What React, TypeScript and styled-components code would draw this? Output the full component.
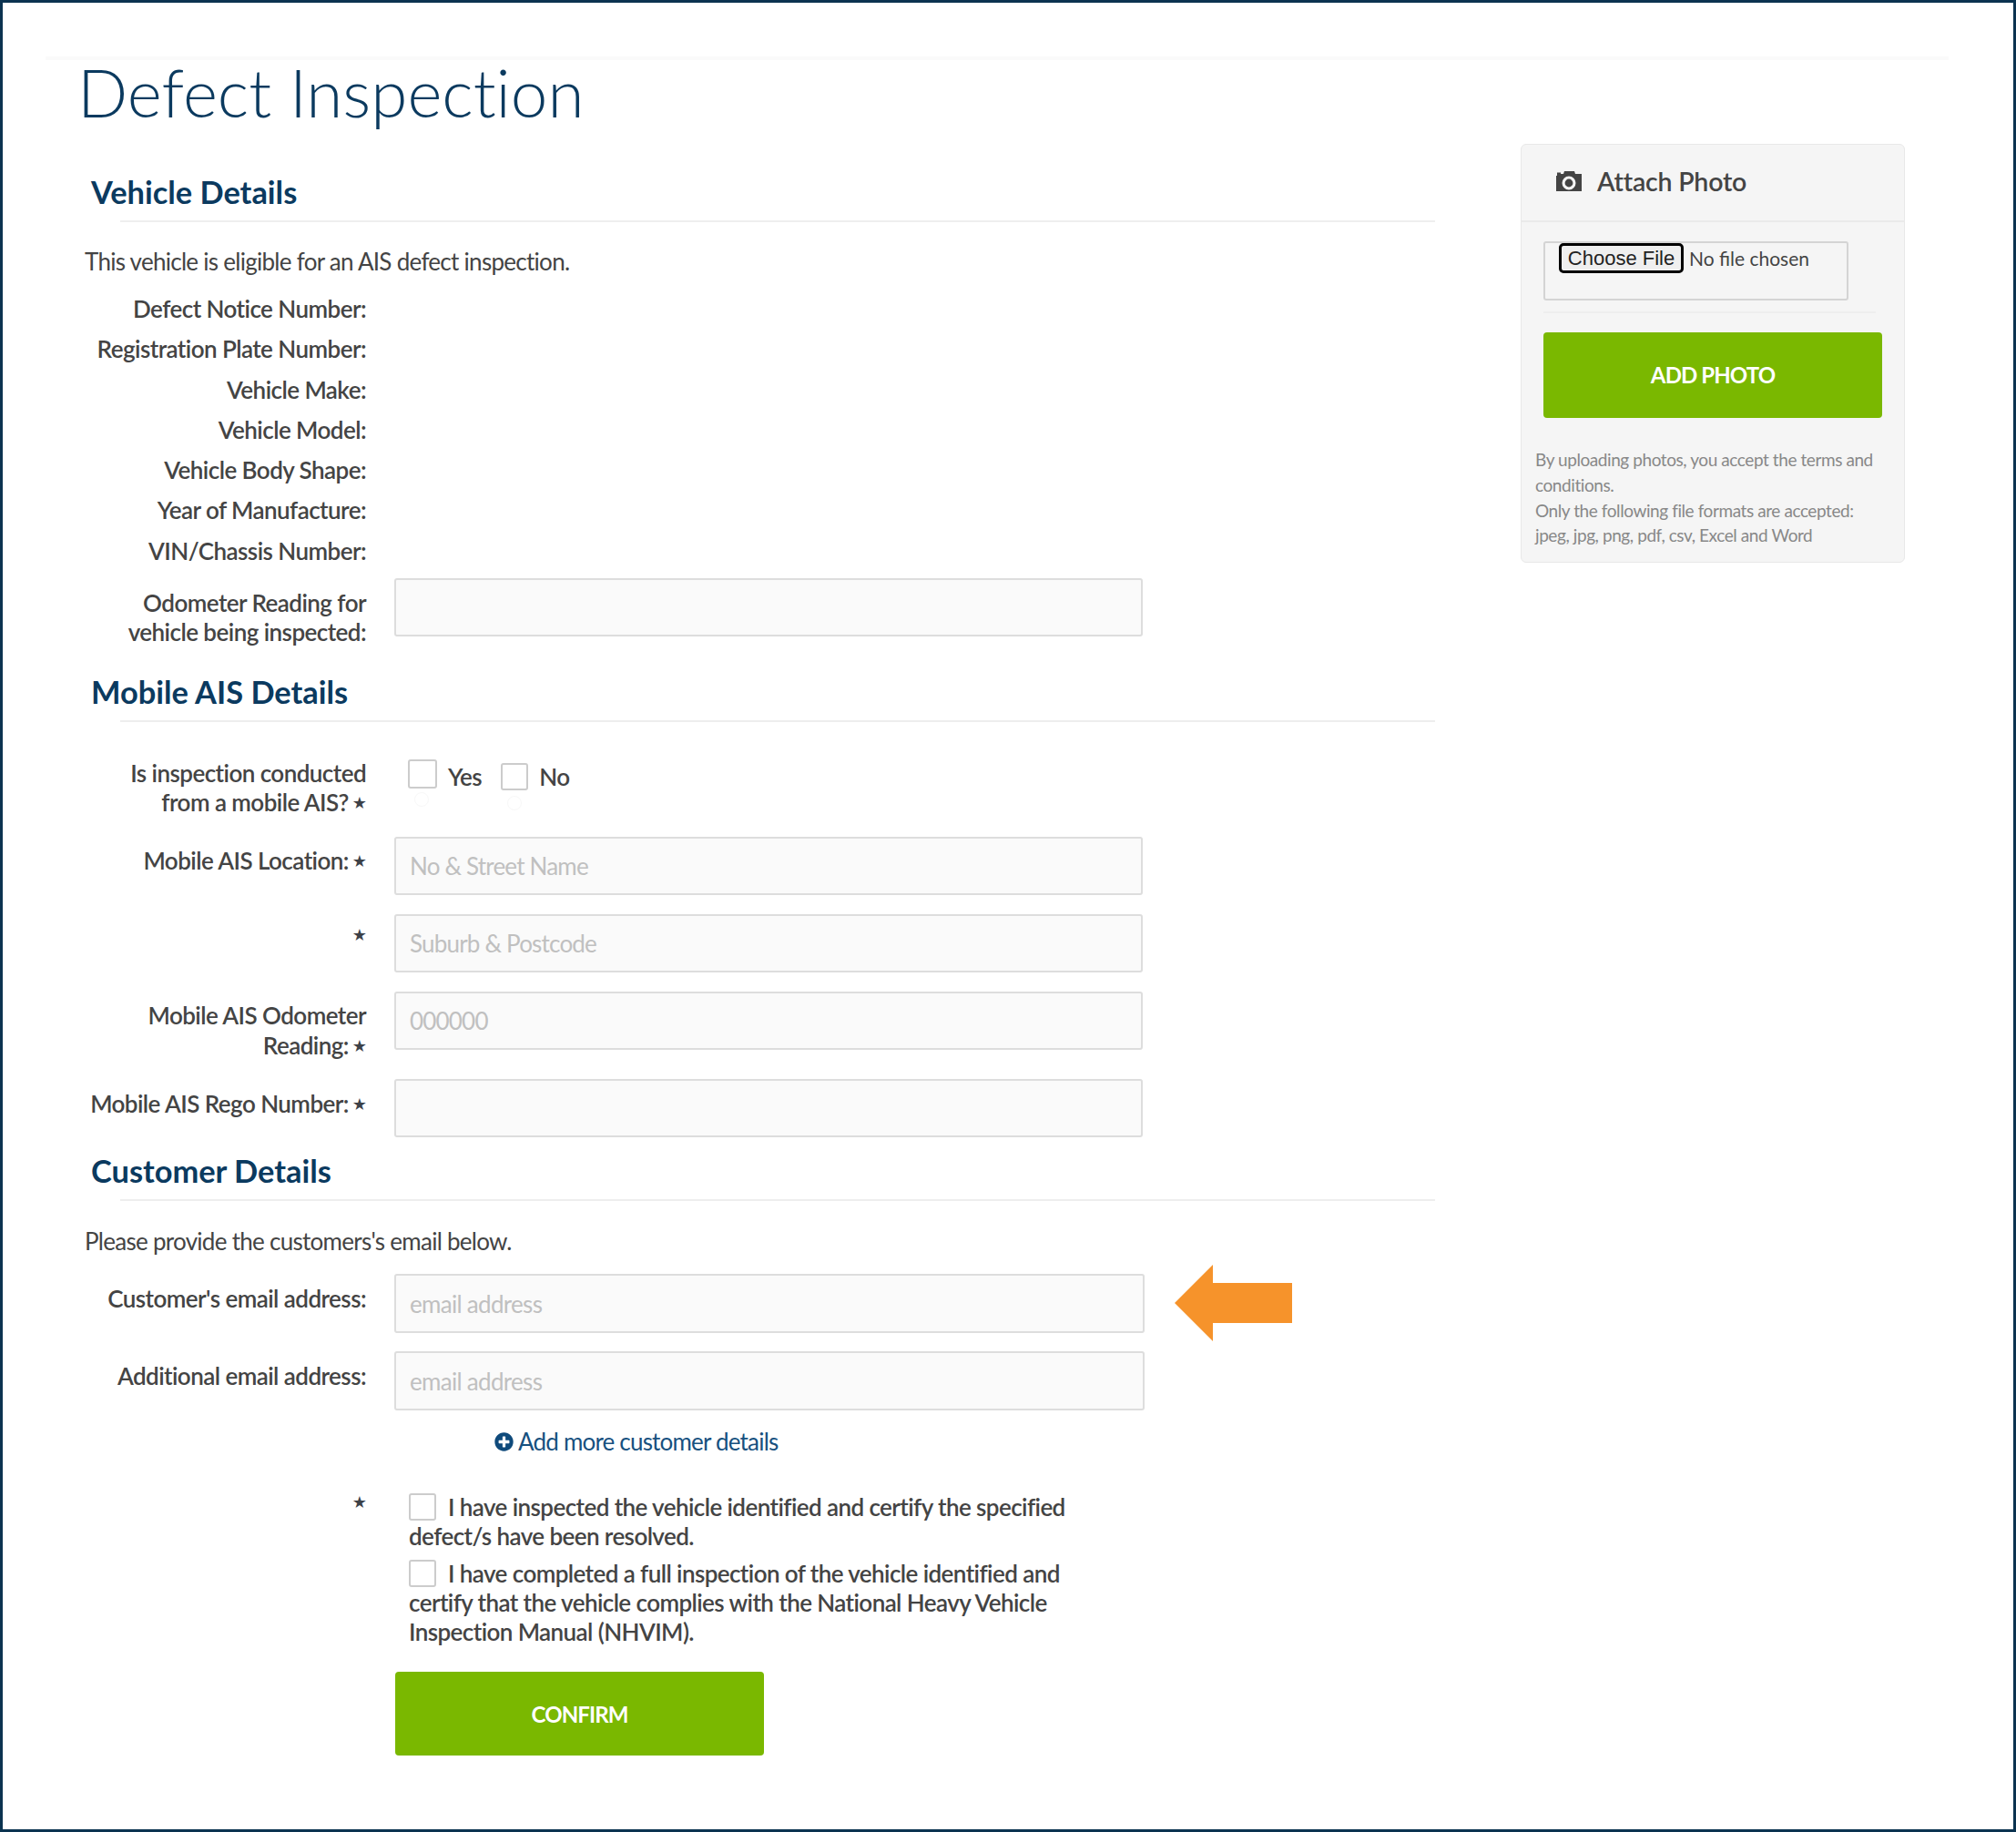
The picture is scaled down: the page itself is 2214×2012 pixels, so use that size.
import { FC, ReactNode } from "react";
import styled, { createGlobalStyle } from "styled-components";
import { FaPlusCircle } from "react-icons/fa";

const GlobalStyle = createGlobalStyle`
  html, body {
    margin: 0;
    padding: 0;
    background: #fff;
  }
  body {
    font-family: "Lato", "Liberation Sans", sans-serif;
    color: #444;
  }
`;

const Frame = styled.div`
  box-sizing: border-box;
  width: 2214px;
  height: 2012px;
  border: 3px solid #0b3350;
  overflow: hidden;
`;

const PageHeader = styled.header`
  width: 2090px;
  margin: 59px 0 0 47px;
  border-top: 4px solid #fafafa;
`;

const Title = styled.h1`
  margin: 0 0 0 35px;
  padding-top: 1px;
  font-size: 72.8px;
  line-height: 68px;
  font-weight: 300;
  color: #0b3a5f;
  font-feature-settings: "liga" 0;
`;

const Body = styled.div`
  display: flex;
  align-items: flex-start;
`;

const Main = styled.main`
  width: 1573px;
`;

const SectionHead = styled.h2<{ $top: number }>`
  margin: ${({ $top }) => $top}px 0 0 97px;
  font-size: 34.4px;
  line-height: 40px;
  font-weight: 700;
  color: #0b3a5f;
`;

const SectionRule = styled.hr`
  height: 2px;
  margin: 11px 0 0 129px;
  border: 0;
  background: #eee;
`;

const Intro = styled.p<{ $top: number; $bottom: number }>`
  margin: ${({ $top }) => $top}px 0 ${({ $bottom }) => $bottom}px 90px;
  font-size: 26px;
  line-height: 32px;
  color: #444;
  letter-spacing: -0.72px;
`;

const StaticList = styled.div`
  display: flex;
  flex-direction: column;
  gap: 11.8px;
  margin-bottom: 14px;
`;

const Label = styled.label`
  display: block;
  font-size: 26px;
  line-height: 32.5px;
  font-weight: 600;
  text-align: right;
  color: #444;
  letter-spacing: -0.55px;
`;

const RequiredMark = styled.span<{ $raise?: number }>`
  margin-left: 4px;
  margin-right: -1px;
  font-family: "DejaVu Sans", sans-serif;
  font-size: 18px;
  line-height: 0;
  letter-spacing: 0;
  color: #3c4148;
  vertical-align: ${({ $raise }) => $raise ?? 3}px;
`;

const Row = styled.div`
  position: relative;
  display: grid;
  grid-template-columns: 399px 822px;
  column-gap: 31px;
`;

const FieldLabel = styled(Label)`
  padding-top: 10.5px;
`;

const FieldStack = styled.div<{ $gap: number }>`
  display: flex;
  flex-direction: column;
  gap: ${({ $gap }) => $gap}px;
`;

const TextInput = styled.input`
  box-sizing: border-box;
  width: 100%;
  height: 64px;
  padding: 0 15px;
  border: 2px solid #ddd;
  border-radius: 3px;
  background: #fafafa;
  font-family: inherit;
  font-size: 26px;
  letter-spacing: -0.8px;
  color: #444;

  &::placeholder {
    color: #c0c0c0;
    opacity: 1;
  }
`;

const EmailInput = styled(TextInput)`
  width: calc(100% + 2px);
  height: 65px;
  letter-spacing: -0.7px;
`;

const ChoiceRow = styled(Row)`
  margin-top: 40px;
  margin-bottom: 21px;
`;

const Choices = styled.div`
  display: flex;
  align-items: center;
  height: 40px;
  padding-left: 15px;
`;

const Box = styled.span`
  position: relative;
  display: inline-block;
  box-sizing: border-box;
  width: 30px;
  height: 30px;
  border: 2px solid #ccc;
  border-radius: 3px;
  background: #fff;
`;

const RaisedBox = styled(Box)`
  width: 32px;
  height: 32px;
  margin-bottom: 6px;
`;

const GhostRadio = styled.span`
  position: absolute;
  left: 5px;
  top: 34px;
  width: 14px;
  height: 14px;
  border: 1px solid #f8f8f8;
  border-radius: 50%;
`;

const ChoiceText = styled.span`
  margin: 0 21px 0 12px;
  font-size: 26px;
  line-height: 32px;
  font-weight: 600;
  letter-spacing: -0.55px;
  color: #444;
`;

const Arrow = styled.svg`
  position: absolute;
  left: 1287px;
  top: -10px;
  width: 129px;
  height: 84px;
`;

const AddMore = styled.a`
  display: flex;
  align-items: center;
  gap: 5px;
  margin: 18px 0 0 540px;
  font-size: 26px;
  line-height: 32px;
  letter-spacing: -0.8px;
  color: #17517f;
`;

const CertifyRow = styled(Row)`
  margin-top: 40px;
`;

const Star = styled(Label)`
  line-height: 32px;
`;

const CertifyList = styled.div`
  display: flex;
  flex-direction: column;
  gap: 9px;
  padding-left: 16px;
`;

const Certify = styled.div`
  font-size: 26px;
  line-height: 32px;
  font-weight: 600;
  letter-spacing: -0.58px;
  color: #444;

  ${Box} {
    margin-right: 13px;
    vertical-align: -5px;
  }
`;

const GreenButton = styled.button`
  display: block;
  border: 0;
  border-radius: 4px;
  background: #7ab800;
  color: #fff;
  font-family: inherit;
  font-size: 24px;
  font-weight: 700;
  letter-spacing: -0.9px;
`;

const ConfirmButton = styled(GreenButton)`
  width: 405px;
  height: 92px;
  margin: 28px 0 0 431px;
`;

const Aside = styled.aside`
  box-sizing: border-box;
  width: 422px;
  height: 460px;
  margin: 23px 0 0 94px;
  border: 1px solid #e8e8e8;
  border-radius: 6px;
  background: #f5f5f5;
`;

const PanelHead = styled.div`
  box-sizing: border-box;
  display: flex;
  align-items: center;
  gap: 17px;
  height: 85px;
  padding: 0 0 4px 38px;
  border-bottom: 2px solid #eaeaea;
`;

const PanelTitle = styled.h3`
  margin: 0;
  font-size: 28.5px;
  line-height: 34px;
  font-weight: 600;
  letter-spacing: -0.2px;
  color: #444;
`;

const PanelBody = styled.div`
  padding: 21px 24px 0 24px;
`;

const FileBox = styled.div`
  box-sizing: border-box;
  display: flex;
  align-items: center;
  width: 335px;
  height: 65px;
  padding: 0 0 28px 15px;
  border: 2px solid #d4d4d4;
  border-radius: 3px;
`;

const FileButton = styled.button`
  box-sizing: border-box;
  width: 137px;
  height: 33px;
  padding: 0;
  border: 3px solid #000;
  border-radius: 5px;
  background: #efefef;
  font-family: "Liberation Sans", Arial, sans-serif;
  font-size: 22px;
  line-height: 26px;
  color: #222;
`;

const FileStatus = styled.span`
  margin-left: 6px;
  font-size: 21px;
  line-height: 26px;
  color: #444;
`;

const PanelRule = styled.hr`
  height: 2px;
  width: 365px;
  margin: 12px 0 21px;
  border: 0;
  background: #eee;
`;

const AddPhotoButton = styled(GreenButton)`
  width: 372px;
  height: 94px;
  padding-bottom: 3px;
`;

const Note = styled.p`
  margin: 32px 0 0 -9px;
  font-size: 19px;
  line-height: 27.8px;
  letter-spacing: -0.42px;
  color: #888;
  white-space: nowrap;
`;

const CameraIcon = () => (
  <svg width="28" height="22" viewBox="0 0 28 22" aria-hidden="true">
    <path
      fill="#444"
      fillRule="evenodd"
      d="M0 5V22H28V3H21L20 0H9L8 3H5V1.5H1V5H0zM14 5.5a7.5 7.5 0 1 0 0 15 7.5 7.5 0 0 0 0-15zM14 8.6a4.4 4.4 0 1 1 0 8.8 4.4 4.4 0 0 1 0-8.8z"
    />
  </svg>
);

type FieldProps = {
  label: ReactNode;
  placeholder?: string;
};

const Field: FC<FieldProps> = ({ label, placeholder }) => (
  <Row>
    <FieldLabel>{label}</FieldLabel>
    <TextInput placeholder={placeholder} />
  </Row>
);

const Required: FC<{ raise?: number }> = ({ raise }) => <RequiredMark $raise={raise}>★</RequiredMark>;

const STATIC_LABELS = [
  "Defect Notice Number:",
  "Registration Plate Number:",
  "Vehicle Make:",
  "Vehicle Model:",
  "Vehicle Body Shape:",
  "Year of Manufacture:",
  "VIN/Chassis Number:",
];

const App = () => (
  <Frame>
    <GlobalStyle />
    <PageHeader>
      <Title>Defect Inspection</Title>
    </PageHeader>

    <Body>
      <Main>
        <SectionHead $top={56}>Vehicle Details</SectionHead>
        <SectionRule />
        <Intro $top={27} $bottom={20}>
          This vehicle is eligible for an AIS defect inspection.
        </Intro>
        <StaticList>
          {STATIC_LABELS.map((label) => (
            <Row key={label}>
              <Label>{label}</Label>
            </Row>
          ))}
        </StaticList>
        <Field
          label={
            <>
              Odometer Reading for
              <br />
              vehicle being inspected:
            </>
          }
        />

        <SectionHead $top={29}>Mobile AIS Details</SectionHead>
        <SectionRule />
        <ChoiceRow>
          <Label>
            Is inspection conducted
            <br />
            from a mobile AIS?
            <Required />
          </Label>
          <Choices>
            <RaisedBox>
              <GhostRadio />
            </RaisedBox>
            <ChoiceText>Yes</ChoiceText>
            <Box>
              <GhostRadio />
            </Box>
            <ChoiceText>No</ChoiceText>
          </Choices>
        </ChoiceRow>
        <FieldStack $gap={21}>
          <Field
            label={
              <>
                Mobile AIS Location:
                <Required />
              </>
            }
            placeholder="No & Street Name"
          />
          <Field label={<Required raise={7} />} placeholder="Suburb & Postcode" />
          <Field
            label={
              <>
                Mobile AIS Odometer
                <br />
                Reading:
                <Required />
              </>
            }
            placeholder="000000"
          />
          <Field
            label={
              <>
                Mobile AIS Rego Number:
                <Required />
              </>
            }
          />
        </FieldStack>

        <SectionHead $top={17}>Customer Details</SectionHead>
        <SectionRule />
        <Intro $top={28} $bottom={20}>
          Please provide the customers's email below.
        </Intro>
        <FieldStack $gap={20}>
          <Row>
            <FieldLabel>Customer's email address:</FieldLabel>
            <EmailInput placeholder="email address" />
            <Arrow viewBox="0 0 129 84" aria-hidden="true">
              <path fill="#f6932b" d="M0 42 42 0v20h87v44H42v20z" />
            </Arrow>
          </Row>
          <Row>
            <FieldLabel>Additional email address:</FieldLabel>
            <EmailInput placeholder="email address" />
          </Row>
        </FieldStack>
        <AddMore>
          <FaPlusCircle size={21} color="#0f4a7b" />
          Add more customer details
        </AddMore>
        <CertifyRow>
          <Star>
            <Required raise={9} />
          </Star>
          <CertifyList>
            <Certify>
              <Box />I have inspected the vehicle identified and certify the specified
              <br />
              defect/s have been resolved.
            </Certify>
            <Certify>
              <Box />I have completed a full inspection of the vehicle identified and
              <br />
              certify that the vehicle complies with the National Heavy Vehicle
              <br />
              Inspection Manual (NHVIM).
            </Certify>
          </CertifyList>
        </CertifyRow>
        <ConfirmButton>CONFIRM</ConfirmButton>
      </Main>

      <Aside>
        <PanelHead>
          <CameraIcon />
          <PanelTitle>Attach Photo</PanelTitle>
        </PanelHead>
        <PanelBody>
          <FileBox>
            <FileButton>Choose File</FileButton>
            <FileStatus>No file chosen</FileStatus>
          </FileBox>
          <PanelRule />
          <AddPhotoButton>ADD PHOTO</AddPhotoButton>
          <Note>
            By uploading photos, you accept the terms and
            <br />
            conditions.
            <br />
            Only the following file formats are accepted:
            <br />
            jpeg, jpg, png, pdf, csv, Excel and Word
          </Note>
        </PanelBody>
      </Aside>
    </Body>
  </Frame>
);

export default App;
